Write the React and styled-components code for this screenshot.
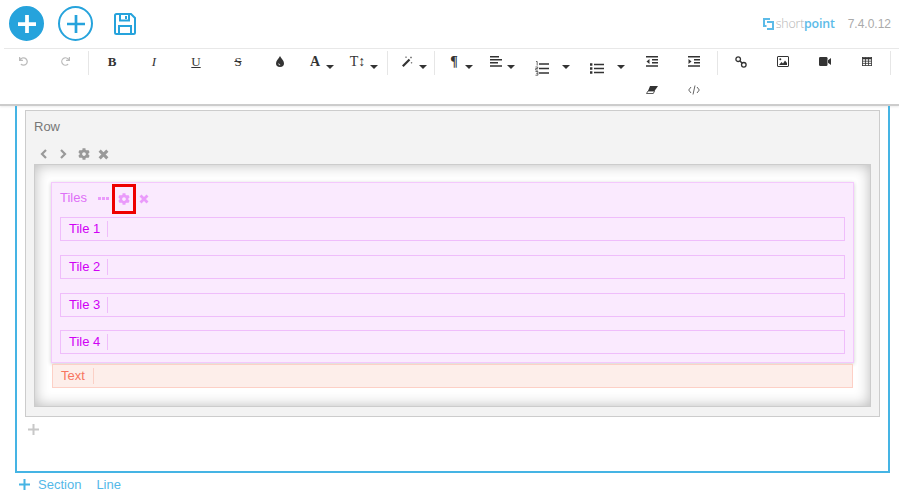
import React from "react";
import styled, { createGlobalStyle } from "styled-components";
import { FaUndo, FaRedo, FaCog } from "react-icons/fa";

const Global = createGlobalStyle`
  html, body { margin: 0; padding: 0; background: #fff; }
  body { font-family: "Liberation Sans", Arial, sans-serif; width: 899px; height: 500px; overflow: hidden; }
`;
const Header = styled.header`
  height: 104px; background: #fff; border-bottom: 2px solid #ccc;
  box-shadow: 0 1px 2px rgba(0,0,0,.08);
`;
const TopBar = styled.div`
  height: 47px; margin-left: 4px; border-bottom: 1px solid #e8e8e8; display: flex; align-items: center; padding: 0 8px 1px 5px;
`;
const Round = styled.button`
  width: 35px; height: 35px; padding: 0; margin-right: 14px; border-radius: 50%;
  border: 2.5px solid #26a3dc; background: ${p => p.$filled ? "#26a3dc" : "#fff"};
  display: flex; align-items: center; justify-content: center;
`;
const SaveBtn = styled.span` margin-left: 7px; display: flex; `;
const Logo = styled.div`
  margin-left: auto; display: flex; align-items: center; gap: 2px; font: 300 12.4px "Open Sans", sans-serif; color: #b5b5b5; letter-spacing: -.2px;
  b { font-weight: 600; color: #5cbbe8; }
`;
const Version = styled.span` margin-left: 13px; font-size: 12px; color: #aaa; `;
const ToolRow = styled.div` display: flex; height: 28px; padding-left: 2px; margin-top: 2px; `;
const Row2 = styled.div` display: flex; height: 22px; padding-left: 631px; `;
const Group = styled.div`
  display: flex; height: 24px; padding-right: 2px; margin-right: ${p => p.$mr ?? 2}px; border-right: 1px solid #e6e6e6;
`;
const Tool = styled.span`
  width: ${p => p.$w || 42}px; padding-left: ${p => p.$pl || 0}px; box-sizing: border-box; height: 21px; display: flex; align-items: center; justify-content: center;
  gap: ${p => p.$gap ?? 6}px; color: ${p => p.$dim ? "#bbb" : "#333"};
`;
const Glyph = styled.span`
  font: ${p => p.$italic ? "italic" : "normal"} ${p => p.$bold ? "bold" : "normal"} ${p => p.$size || 13}px/1 "Liberation Serif", serif;
  text-decoration: ${p => p.$deco || "none"}; color: #333;
`;
const Caret = styled.i`
  width: 0; height: 0; border: 4px solid transparent; border-top-color: #333; border-bottom: 0; margin-top: 11px; flex: none;
`;
const LowIcon = styled.svg` margin-top: 14px; flex: none; `;
const Canvas = styled.main` padding: 0 9px 0 15px; `;
const Section = styled.section`
  width: 875px; box-sizing: border-box; height: 367px; border: 2px solid #45b4e4; border-top: 0; padding: 4px 8px 0 8px;
`;
const RowBox = styled.div`
  height: 307px; box-sizing: border-box; background: #f3f3f3; border: 1px solid #ccc; padding: 7px 8px 9px 8px; display: flex; flex-direction: column;
`;
const RowLabel = styled.div` font-size: 13px; color: #777; height: 17px; line-height: 17px; `;
const RowTools = styled.div` display: flex; align-items: center; gap: 11px; height: 18px; margin-top: 10px; margin-bottom: 1px; color: #999; padding-left: 6px; `;
const RowCross = styled.span` display: flex; margin-left: -3px; `;
const Inner = styled.div`
  flex: 1; background: #fff; border: 1px solid #ccc; box-shadow: inset 0 0 14px rgba(0,0,0,.28); padding: 17px 16px 0 16px;
`;
const Tiles = styled.div`
  height: 181px; box-sizing: border-box; background: #faeafe; border: 1px solid #f4c8fd; box-shadow: 0 1px 4px rgba(0,0,0,.2); padding: 3px 8px 0 8px;
`;
const TilesHead = styled.div` display: flex; align-items: center; height: 22px; color: #de6ff7; font-size: 13px; margin-bottom: 9px; `;
const TilesLabel = styled.span` width: 38px; `;
const HeadIcon = styled.span`
  position: relative; width: ${p => p.$w}px; margin-top: 3px; display: flex; justify-content: center;
`;
const Highlight = styled.span`
  position: absolute; left: 3px; top: -9px; width: 24px; height: 30px; box-sizing: border-box; border: 3px solid #ee0000;
`;
const TileRow = styled.div`
  height: 24px; box-sizing: border-box; border: 1px solid #efbdfb; margin-bottom: ${p => p.$mb}px; padding: 3px 0 3px 8px; display: flex;
`;
const TileName = styled.span` font-size: 13px; color: #d000f5; line-height: 16px; padding-right: 7px; border-right: 1px solid #efbdfb; `;
const TextRow = styled.div`
  height: 24px; box-sizing: border-box; margin: 1px 1px 0; background: #fdeeea; border: 1px solid #fdd0c6; padding: 3px 0 3px 8px; display: flex;
`;
const TextName = styled.span` font-size: 13px; color: #f77560; line-height: 16px; padding-right: 8px; border-right: 1px solid #fbd0c6; `;
const AddRow = styled.div` padding: 7px 0 0 3px; display: flex; `;
const Foot = styled.footer`
  display: flex; align-items: center; padding: 3px 0 0 19px; height: 17px; font-size: 13px; color: #54b8e8;
`;
const FootLink = styled.span` margin-left: ${p => p.$ml}px; `;

const Plus = ({ s, c, w }) => (
  <svg width={s} height={s} viewBox="0 0 12 12"><path d="M6 0v12M0 6h12" stroke={c} strokeWidth={w} /></svg>
);
const Cross = ({ s, c }) => (
  <svg width={s} height={s} viewBox="0 0 10 10"><path d="M1.500 1.500l7 7M8.500 1.500l-7 7" stroke={c} strokeWidth="2.800" /></svg>
);
const Chevron = ({ d }) => (
  <svg width="8" height="10" viewBox="0 0 8 10"><path d={d} fill="none" stroke="#999" strokeWidth="2.200" /></svg>
);
const Dots = () => (
  <svg width="11" height="3" viewBox="0 0 11 3"><path d="M0 0h3v3H0zM4 0h3v3H4zM8 0h3v3H8z" fill="#ea9bfb" /></svg>
);
const Save = () => (
  <svg width="22" height="22" viewBox="0 0 22 22" fill="none" stroke="#26a3dc" strokeWidth="2">
    <path d="M1 2.500A1.500 1.500 0 0 1 2.500 1H17l4 4v14.500a1.500 1.500 0 0 1-1.500 1.500h-17A1.500 1.500 0 0 1 1 19.500z" />
    <path d="M6 1v6.500h9V1M5 21v-8h12v8" />
    <path d="M12 3v3" />
  </svg>
);
const LogoMark = () => (
  <svg width="11" height="12" viewBox="0 0 11 12" fill="none" stroke="#5cbbe8" strokeWidth="2">
    <path d="M7 1H1v7h2.500M4 4h6v7H4" />
  </svg>
);
const Lines = ({ d }) => (
  <svg width="12" height="11" viewBox="0 0 12 11"><path d={d} stroke="#333" strokeWidth="1.400" fill="none" /></svg>
);
const Outdent = () => (
  <svg width="12" height="11" viewBox="0 0 12 11"><path d="M0 .7h12M6 3.700h6M6 6.700h6M0 10h12" stroke="#333" strokeWidth="1.400" /><path d="M3.500 3v5L.5 5.500z" fill="#333" /></svg>
);
const Indent = () => (
  <svg width="12" height="11" viewBox="0 0 12 11"><path d="M0 .7h12M6 3.700h6M6 6.700h6M0 10h12" stroke="#333" strokeWidth="1.400" /><path d="M.5 3v5l3-2.500z" fill="#333" /></svg>
);
const ListOl = () => (
  <LowIcon width="14" height="15" viewBox="0 0 14 15">
    <path d="M4 3h10M4 7.500h10M4 12h10" stroke="#333" strokeWidth="1.700" />
    <path d="M1 .5h1.200v4M.5 6h2.200v1.500H.700v1.600h2.200M.5 10.500h2.400v1.800H1.200M2.900 12.300v1.900H.5" stroke="#444" strokeWidth=".8" fill="none" />
  </LowIcon>
);
const ListUl = () => (
  <LowIcon width="14" height="11" viewBox="0 0 14 11">
    <path d="M4 1.500h10M4 5.500h10M4 9.500h10" stroke="#333" strokeWidth="1.700" />
    <path d="M0 .3h2.400v2.400H0zM0 4.300h2.400v2.400H0zM0 8.300h2.400v2.400H0z" fill="#333" />
  </LowIcon>
);
const Wand = () => (
  <svg width="11" height="11" viewBox="0 0 11 11"><path d="M.8 10.200L7.500 3.500" stroke="#333" strokeWidth="2.200" /><path d="M9 .5v2M8 1.500h2M4 .5v1.500M3.300 1.200h1.500M9.500 6v1.500M8.800 6.700h1.500" stroke="#777" strokeWidth=".8" /></svg>
);
const Drop = () => (
  <svg width="8" height="11" viewBox="0 0 8 11"><path d="M4 0C5 2.500 8 4.500 8 7.200A4 3.800 0 0 1 0 7.200C0 4.500 3 2.500 4 0z" fill="#333" /><path d="M2.700 7.500a1.400 1.400 0 0 0 1.500 1.400" stroke="#fff" strokeWidth=".8" fill="none" /></svg>
);
const Chain = () => (
  <svg width="12" height="12" viewBox="0 0 12 12" fill="none" stroke="#333" strokeWidth="1.300"><circle cx="3.200" cy="3.200" r="2.300" /><circle cx="8.800" cy="8.800" r="2.300" /><path d="M4.800 4.800l2.400 2.400" strokeWidth="1.600" /></svg>
);
const Picture = () => (
  <svg width="12" height="11" viewBox="0 0 12 11"><rect x=".5" y=".5" width="11" height="10" rx=".5" fill="#fff" stroke="#333" /><path d="M2 9l2.500-3 1.500 1.500L8 4.500 10 7v2z" fill="#333" /><circle cx="3.300" cy="3.200" r="1" fill="#333" /></svg>
);
const Camera = () => (
  <svg width="12" height="9" viewBox="0 0 12 9"><rect width="8.500" height="9" rx="1.200" fill="#333" /><path d="M9 3.300L12 1v7L9 5.700z" fill="#333" /></svg>
);
const Grid = () => (
  <svg width="10" height="9" viewBox="0 0 10 9" fill="none" stroke="#333" strokeWidth=".8"><rect x=".4" y=".4" width="9.200" height="8.200" /><path d="M.4 1.600h9.200" strokeWidth="1.400" /><path d="M.4 4.200h9.200M.4 6.400h9.200M3.500 .4v8.200M6.500 .4v8.200" /></svg>
);
const Eraser = () => (
  <svg width="12" height="8" viewBox="0 0 12 8"><path d="M4 0h8L8.500 5H2z" fill="#333" /><path d="M2 5h6.500L7.300 7.500H.5z" fill="#fff" stroke="#333" strokeWidth=".8" /></svg>
);
const CodeIcon = () => (
  <svg width="12" height="10" viewBox="0 0 12 10" fill="none" stroke="#666" strokeWidth="1"><path d="M3 2L.7 5 3 8M9 2l2.300 3L9 8M7 .5L5 9.500" /></svg>
);

export default function App() {
  return (
    <>
      <Global />
      <Header>
        <TopBar>
          <Round $filled><Plus s={18} c="#fff" w={2.500} /></Round>
          <Round><Plus s={18} c="#26a3dc" w={1.800} /></Round>
          <SaveBtn><Save /></SaveBtn>
          <Logo>
            <LogoMark />
            <span>short<b>point</b></span>
          </Logo>
          <Version>7.4.0.12</Version>
        </TopBar>
        <ToolRow>
          <Group>
            <Tool $dim><FaUndo size={9} /></Tool>
            <Tool $dim><FaRedo size={9} /></Tool>
          </Group>
          <Group>
            <Tool><Glyph $bold>B</Glyph></Tool>
            <Tool><Glyph $italic>I</Glyph></Tool>
            <Tool><Glyph $deco="underline">U</Glyph></Tool>
            <Tool><Glyph $deco="line-through">S</Glyph></Tool>
            <Tool><Drop /></Tool>
            <Tool><Glyph $bold $size={14}>A</Glyph><Caret /></Tool>
            <Tool $gap={5}><Glyph $size={14}>T↕</Glyph><Caret /></Tool>
          </Group>
          <Group>
            <Tool $pl={6}><Wand /><Caret /></Tool>
          </Group>
          <Group>
            <Tool $pl={7} $gap={7}><Glyph $bold $size={14}>¶</Glyph><Caret /></Tool>
            <Tool $pl={5} $gap={5}><Lines d="M0 .7h9M0 3.700h12M0 6.700h8M0 10h12" /><Caret /></Tool>
            <Tool $w={56} $pl={7} $gap={13}><ListOl /><Caret /></Tool>
            <Tool $w={54} $pl={7} $gap={13}><ListUl /><Caret /></Tool>
            <Tool><Outdent /></Tool>
            <Tool><Indent /></Tool>
          </Group>
          <Group $mr={0}>
            <Tool><Chain /></Tool>
            <Tool><Picture /></Tool>
            <Tool><Camera /></Tool>
            <Tool><Grid /></Tool>
          </Group>
        </ToolRow>
        <Row2>
          <Tool><Eraser /></Tool>
          <Tool><CodeIcon /></Tool>
        </Row2>
      </Header>
      <Canvas>
        <Section>
          <RowBox>
            <RowLabel>Row</RowLabel>
            <RowTools>
              <Chevron d="M6 1L2 5l4 4" />
              <Chevron d="M2 1l4 4-4 4" />
              <FaCog size={12} />
              <RowCross><Cross s={11} c="#999" /></RowCross>
            </RowTools>
            <Inner>
              <Tiles>
                <TilesHead>
                  <TilesLabel>Tiles</TilesLabel>
                  <HeadIcon $w={11}><Dots /></HeadIcon>
                  <HeadIcon $w={30}>
                    <Highlight />
                    <FaCog size={12} color="#ea9bfb" />
                  </HeadIcon>
                  <HeadIcon $w={10}><Cross s={10} c="#ea9bfb" /></HeadIcon>
                </TilesHead>
                <TileRow $mb={14}><TileName>Tile 1</TileName></TileRow>
                <TileRow $mb={14}><TileName>Tile 2</TileName></TileRow>
                <TileRow $mb={13}><TileName>Tile 3</TileName></TileRow>
                <TileRow $mb={0}><TileName>Tile 4</TileName></TileRow>
              </Tiles>
              <TextRow><TextName>Text</TextName></TextRow>
            </Inner>
          </RowBox>
          <AddRow><Plus s={11} c="#c8c8c8" w={2.200} /></AddRow>
        </Section>
      </Canvas>
      <Foot>
        <Plus s={11} c="#45b4e4" w={2.200} />
        <FootLink $ml={8}>Section</FootLink>
        <FootLink $ml={15}>Line</FootLink>
      </Foot>
    </>
  );
}
